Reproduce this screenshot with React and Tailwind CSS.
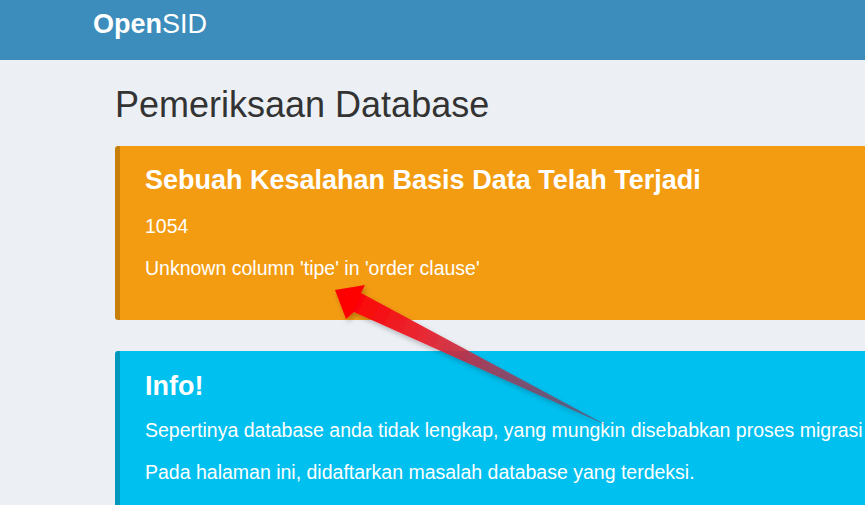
import React from 'react'

const font = { fontFamily: '"Liberation Sans", Arial, Helvetica, sans-serif' }

function Arrow() {
  return (
    <svg className="absolute left-0 top-0 pointer-events-none" width="865" height="505" viewBox="0 0 865 505">
      <defs>
        <linearGradient id="shaft" x1="345" y1="300" x2="608" y2="426" gradientUnits="userSpaceOnUse">
          <stop offset="0" stopColor="#ff0000" />
          <stop offset="0.3" stopColor="#e8222e" stopOpacity="0.95" />
          <stop offset="0.6" stopColor="#a03a58" stopOpacity="0.85" />
          <stop offset="1" stopColor="#5c4c6c" stopOpacity="0.7" />
        </linearGradient>
        <filter id="shadow" x="-10%" y="-10%" width="130%" height="130%">
          <feDropShadow dx="2" dy="3" stdDeviation="2.5" floodColor="#000" floodOpacity="0.25" />
        </filter>
      </defs>
      <polygon
        points="335,290 365,285 361,293 608,426 354,312 346,319"
        fill="url(#shaft)"
        filter="url(#shadow)"
      />
    </svg>
  )
}

export default function App() {
  return (
    <div className="relative w-[865px] h-[505px] overflow-hidden bg-[#ecf0f5]" style={font}>
      <header className="h-[60px] bg-[#3c8dbc] pl-[93px] pt-[11px]">
        <div className="text-[27px] leading-[27px] text-white">
          <b>Open</b>SID
        </div>
      </header>

      <div className="pl-[115px]">
        <h1 className="mt-[27px] text-[36px] leading-[36px] text-[#333]">Pemeriksaan Database</h1>

        <div className="mt-[23px] w-[820px] rounded-[3px] border-l-[5px] border-[#c87f0a] bg-[#f39c12] pl-[25px] pt-[21px] pb-[42px] text-white">
          <h4 className="text-[27px] leading-[27px] font-bold">Sebuah Kesalahan Basis Data Telah Terjadi</h4>
          <p className="mt-[23px] text-[19.5px] leading-[19px]">1054</p>
          <p className="mt-[23px] text-[19.5px] leading-[19px]">Unknown column 'tipe' in 'order clause'</p>
        </div>

        <div className="mt-[31px] w-[820px] h-[200px] rounded-[3px] border-l-[5px] border-[#0097bc] bg-[#00c0ef] pl-[25px] pt-[22px] text-white whitespace-nowrap">
          <h4 className="text-[27px] leading-[27px] font-bold">Info!</h4>
          <p className="mt-[21px] text-[19.5px] leading-[19px]">Sepertinya database anda tidak lengkap, yang mungkin disebabkan proses migrasi</p>
          <p className="mt-[23px] text-[19.5px] leading-[19px]">Pada halaman ini, didaftarkan masalah database yang terdeksi.</p>
        </div>
      </div>

      <Arrow />
    </div>
  )
}
